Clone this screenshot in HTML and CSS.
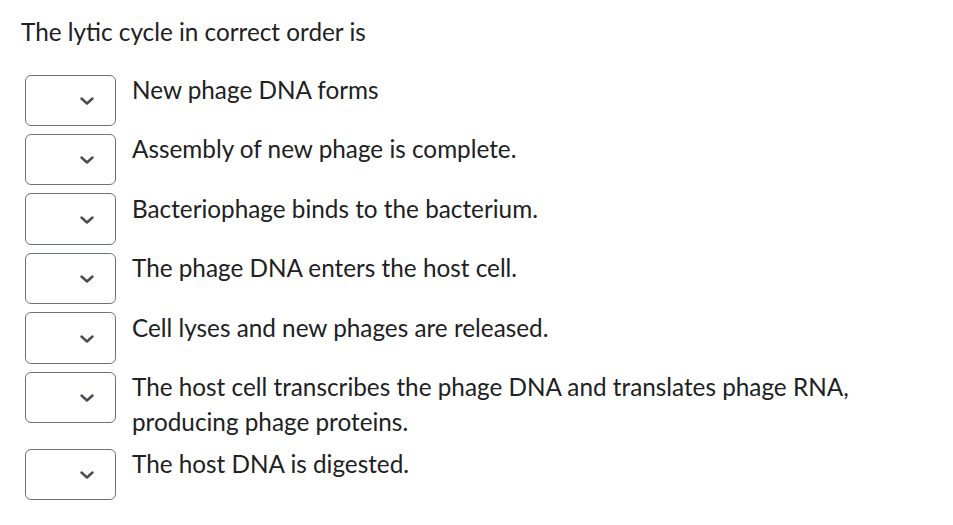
FILE: index.html
```html
<!DOCTYPE html>
<html>
<head>
<meta charset="utf-8">
<link rel="stylesheet" href="styles.css">
</head>
<body>
<div class="question">
  <p class="prompt">The lytic cycle in correct order is</p>
  <div class="items">
    <div class="item">
      <div class="select"><svg class="chev" viewBox="0 0 14 8" width="14" height="8"><path d="M1.5 1.5 L7 6.5 L12.5 1.5" fill="none" stroke="#494c4e" stroke-width="2.4" stroke-linecap="round" stroke-linejoin="round"/></svg></div>
      <div class="label">New phage DNA forms</div>
    </div>
    <div class="item">
      <div class="select"><svg class="chev" viewBox="0 0 14 8" width="14" height="8"><path d="M1.5 1.5 L7 6.5 L12.5 1.5" fill="none" stroke="#494c4e" stroke-width="2.4" stroke-linecap="round" stroke-linejoin="round"/></svg></div>
      <div class="label">Assembly of new phage is complete.</div>
    </div>
    <div class="item">
      <div class="select"><svg class="chev" viewBox="0 0 14 8" width="14" height="8"><path d="M1.5 1.5 L7 6.5 L12.5 1.5" fill="none" stroke="#494c4e" stroke-width="2.4" stroke-linecap="round" stroke-linejoin="round"/></svg></div>
      <div class="label">Bacteriophage binds to the bacterium.</div>
    </div>
    <div class="item">
      <div class="select"><svg class="chev" viewBox="0 0 14 8" width="14" height="8"><path d="M1.5 1.5 L7 6.5 L12.5 1.5" fill="none" stroke="#494c4e" stroke-width="2.4" stroke-linecap="round" stroke-linejoin="round"/></svg></div>
      <div class="label">The phage DNA enters the host cell.</div>
    </div>
    <div class="item">
      <div class="select"><svg class="chev" viewBox="0 0 14 8" width="14" height="8"><path d="M1.5 1.5 L7 6.5 L12.5 1.5" fill="none" stroke="#494c4e" stroke-width="2.4" stroke-linecap="round" stroke-linejoin="round"/></svg></div>
      <div class="label">Cell lyses and new phages are released.</div>
    </div>
    <div class="item">
      <div class="select"><svg class="chev" viewBox="0 0 14 8" width="14" height="8"><path d="M1.5 1.5 L7 6.5 L12.5 1.5" fill="none" stroke="#494c4e" stroke-width="2.4" stroke-linecap="round" stroke-linejoin="round"/></svg></div>
      <div class="label">The host cell transcribes the phage DNA and translates phage RNA, producing phage proteins.</div>
    </div>
    <div class="item">
      <div class="select"><svg class="chev" viewBox="0 0 14 8" width="14" height="8"><path d="M1.5 1.5 L7 6.5 L12.5 1.5" fill="none" stroke="#494c4e" stroke-width="2.4" stroke-linecap="round" stroke-linejoin="round"/></svg></div>
      <div class="label">The host DNA is digested.</div>
    </div>
  </div>
</div>
</body>
</html>
```

FILE: styles.css
```css
html, body {
  margin: 0;
  padding: 0;
  background: #ffffff;
}
body {
  font-family: Lato, "Noto Sans", sans-serif;
  font-size: 24.3px;
  line-height: 35px;
  color: #202122;
}
.question {
  padding: 14px 0 0 21px;
}
.prompt {
  margin: 0 0 25.5px 0;
}
.items {
  display: flex;
  flex-direction: column;
  gap: 8.3px;
  padding-left: 4px;
}
.item {
  display: flex;
  align-items: flex-start;
  gap: 16px;
}
.select {
  box-sizing: border-box;
  flex: 0 0 91px;
  width: 91px;
  height: 51.2px;
  border: 1px solid #6e7376;
  border-radius: 6px;
  display: flex;
  align-items: center;
  justify-content: flex-end;
  padding-right: 21px;
  padding-top: 1px;
}
.chev {
  display: block;
}
.label {
  width: 760px;
  margin-top: -2.5px;
  padding-bottom: 1.2px;
}
```
